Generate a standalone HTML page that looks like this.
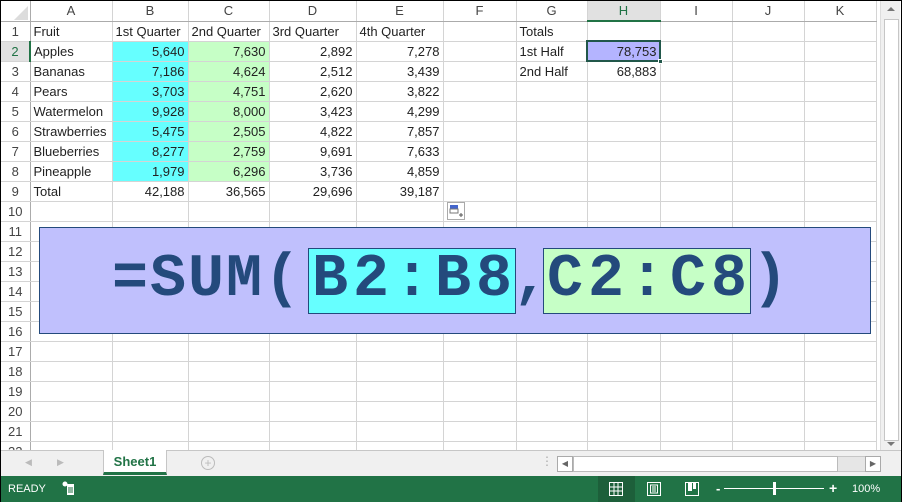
<!DOCTYPE html>
<html><head><style>
*{margin:0;padding:0;box-sizing:border-box}
body{width:902px;height:502px;overflow:hidden;background:#fff;font-family:"Liberation Sans",sans-serif;font-size:13px;color:#222;position:relative}
#frame{position:absolute;left:0;top:0;width:902px;height:502px;border:1px solid #000;border-bottom:none;pointer-events:none;z-index:20}
table{position:absolute;left:1px;top:1px;border-collapse:collapse;table-layout:fixed}
td{height:20px;border-right:1px solid #d4d4d4;border-bottom:1px solid #d4d4d4;padding:0 3px;white-space:nowrap;overflow:hidden;line-height:19px}
tr.h td{text-align:center;color:#444;height:20px;line-height:18px;border-bottom:1px solid #ababab}
td.rh{text-align:center;color:#444;border-right:1px solid #ababab;padding:0}
td.n{text-align:right}
.cy{background:#66ffff}.gr{background:#c6ffc6}
#vs{position:absolute;left:880px;top:1px;width:20px;height:449px;background:#f0f0f0;border-left:1px solid #ddd}
#tabs{position:absolute;left:0;top:450px;width:902px;height:26px;background:#f0f0f0;border-top:1px solid #c6c6c6}
#status{position:absolute;left:0;top:476px;width:902px;height:26px;background:#217346;color:#fff;font-size:11px}
.box{position:absolute;font-family:"Liberation Mono",monospace;font-weight:bold;font-size:60px;color:#244a7c;line-height:1}
</style></head><body>
<div style="position:absolute;left:14px;top:6px;width:0;height:0;border-left:14px solid transparent;border-bottom:14px solid #dcdcdc;z-index:5"></div>
<table>
<colgroup><col style="width:29px"><col style="width:82px"><col style="width:76px"><col style="width:81px"><col style="width:87px"><col style="width:87px"><col style="width:73px"><col style="width:71px"><col style="width:73px"><col style="width:72px"><col style="width:72px"><col style="width:72px"></colgroup>
<tr class="h"><td class="rh"></td><td>A</td><td>B</td><td>C</td><td>D</td><td>E</td><td>F</td><td>G</td><td style="background:#e1e1e1;color:#217346;border-bottom:2px solid #217346">H</td><td>I</td><td>J</td><td>K</td></tr>
<tr><td class="rh">1</td><td>Fruit</td><td>1st Quarter</td><td>2nd Quarter</td><td>3rd Quarter</td><td>4th Quarter</td><td></td><td>Totals</td><td></td><td></td><td></td><td></td></tr>
<tr><td class="rh" style="background:#e1e1e1;color:#217346;border-right:2px solid #217346">2</td><td>Apples</td><td class="n cy">5,640</td><td class="n gr">7,630</td><td class="n">2,892</td><td class="n">7,278</td><td></td><td>1st Half</td><td class="n" style="background:#b4b4ff;outline:2px solid #21574a;outline-offset:-1px">78,753</td><td></td><td></td><td></td></tr>
<tr><td class="rh">3</td><td>Bananas</td><td class="n cy">7,186</td><td class="n gr">4,624</td><td class="n">2,512</td><td class="n">3,439</td><td></td><td>2nd Half</td><td class="n">68,883</td><td></td><td></td><td></td></tr>
<tr><td class="rh">4</td><td>Pears</td><td class="n cy">3,703</td><td class="n gr">4,751</td><td class="n">2,620</td><td class="n">3,822</td><td></td><td></td><td></td><td></td><td></td><td></td></tr>
<tr><td class="rh">5</td><td>Watermelon</td><td class="n cy">9,928</td><td class="n gr">8,000</td><td class="n">3,423</td><td class="n">4,299</td><td></td><td></td><td></td><td></td><td></td><td></td></tr>
<tr><td class="rh">6</td><td>Strawberries</td><td class="n cy">5,475</td><td class="n gr">2,505</td><td class="n">4,822</td><td class="n">7,857</td><td></td><td></td><td></td><td></td><td></td><td></td></tr>
<tr><td class="rh">7</td><td>Blueberries</td><td class="n cy">8,277</td><td class="n gr">2,759</td><td class="n">9,691</td><td class="n">7,633</td><td></td><td></td><td></td><td></td><td></td><td></td></tr>
<tr><td class="rh">8</td><td>Pineapple</td><td class="n cy">1,979</td><td class="n gr">6,296</td><td class="n">3,736</td><td class="n">4,859</td><td></td><td></td><td></td><td></td><td></td><td></td></tr>
<tr><td class="rh">9</td><td>Total</td><td class="n">42,188</td><td class="n">36,565</td><td class="n">29,696</td><td class="n">39,187</td><td></td><td></td><td></td><td></td><td></td><td></td></tr>
<tr><td class="rh">10</td><td></td><td></td><td></td><td></td><td></td><td></td><td></td><td></td><td></td><td></td><td></td></tr>
<tr><td class="rh">11</td><td></td><td></td><td></td><td></td><td></td><td></td><td></td><td></td><td></td><td></td><td></td></tr>
<tr><td class="rh">12</td><td></td><td></td><td></td><td></td><td></td><td></td><td></td><td></td><td></td><td></td><td></td></tr>
<tr><td class="rh">13</td><td></td><td></td><td></td><td></td><td></td><td></td><td></td><td></td><td></td><td></td><td></td></tr>
<tr><td class="rh">14</td><td></td><td></td><td></td><td></td><td></td><td></td><td></td><td></td><td></td><td></td><td></td></tr>
<tr><td class="rh">15</td><td></td><td></td><td></td><td></td><td></td><td></td><td></td><td></td><td></td><td></td><td></td></tr>
<tr><td class="rh">16</td><td></td><td></td><td></td><td></td><td></td><td></td><td></td><td></td><td></td><td></td><td></td></tr>
<tr><td class="rh">17</td><td></td><td></td><td></td><td></td><td></td><td></td><td></td><td></td><td></td><td></td><td></td></tr>
<tr><td class="rh">18</td><td></td><td></td><td></td><td></td><td></td><td></td><td></td><td></td><td></td><td></td><td></td></tr>
<tr><td class="rh">19</td><td></td><td></td><td></td><td></td><td></td><td></td><td></td><td></td><td></td><td></td><td></td></tr>
<tr><td class="rh">20</td><td></td><td></td><td></td><td></td><td></td><td></td><td></td><td></td><td></td><td></td><td></td></tr>
<tr><td class="rh">21</td><td></td><td></td><td></td><td></td><td></td><td></td><td></td><td></td><td></td><td></td><td></td></tr>
<tr><td class="rh">22</td><td></td><td></td><td></td><td></td><td></td><td></td><td></td><td></td><td></td><td></td><td></td></tr>
</table>
<div style="position:absolute;left:658px;top:59px;width:5px;height:5px;background:#21574a;border:1px solid #fff"></div>
<svg style="position:absolute;left:447px;top:202px" width="18" height="18"><rect x="0.5" y="0.5" width="17" height="17" fill="#fff" stroke="#aaa"/><rect x="3" y="3" width="8" height="4" fill="#4466cc"/><rect x="3" y="7" width="8" height="4" fill="none" stroke="#777"/><path d="M12 13h4M14 11v4" stroke="#555"/></svg>
<div style="position:absolute;left:39px;top:227px;width:832px;height:107px;background:#c0c0fd;border:1px solid #244a7c"></div>
<div style="position:absolute;left:308px;top:248px;width:208px;height:66px;background:#66ffff;border:1px solid #244a7c"></div>
<div style="position:absolute;left:543px;top:248px;width:208px;height:66px;background:#c6ffc6;border:1px solid #244a7c"></div>
<div class="box" style="left:112px;top:250px;letter-spacing:2px">=SUM(</div>
<div class="box" style="left:312px;top:250px;letter-spacing:5px">B2:B8</div>
<div class="box" style="left:513px;top:250px">,</div>
<div class="box" style="left:547px;top:250px;letter-spacing:5px">C2:C8</div>
<div class="box" style="left:752px;top:250px">)</div>
<div id="vs"><div style="position:absolute;left:3px;top:18px;width:15px;height:422px;background:#fff;border:1px solid #c6c6c6"></div><div style="position:absolute;left:6px;top:6px;border:4px solid transparent;border-bottom:4px solid #777;border-top:none"></div><div style="position:absolute;left:6px;top:441px;border:4px solid transparent;border-top:4px solid #777;border-bottom:none"></div></div>
<div id="tabs">
<span style="position:absolute;left:25px;top:6px;color:#bbb;font-size:9px">◀</span><span style="position:absolute;left:57px;top:6px;color:#bbb;font-size:9px">▶</span>
<div style="position:absolute;left:103px;top:-1px;width:64px;height:25px;background:#fff;border:1px solid #c6c6c6;border-top:none;border-bottom:3px solid #217346;color:#217346;font-weight:bold;text-align:center;line-height:23px;font-size:13px">Sheet1</div>
<div style="position:absolute;left:201px;top:5px;width:14px;height:14px;border:1px solid #bbb;border-radius:50%;color:#bbb;font-size:12px;line-height:12px;text-align:center">+</div>
<span style="position:absolute;left:541px;top:3px;color:#aaa;font-size:12px">⋮</span>
<div style="position:absolute;left:557px;top:5px;width:324px;height:16px;background:#e6e6e6;border:1px solid #c6c6c6"></div>
<div style="position:absolute;left:557px;top:5px;width:16px;height:16px;border:1px solid #aaa;background:#fff;font-size:8px;color:#666;text-align:center;line-height:14px">◀</div>
<div style="position:absolute;left:573px;top:5px;width:265px;height:16px;background:#fff;border:1px solid #bbb"></div>
<div style="position:absolute;left:865px;top:5px;width:16px;height:16px;border:1px solid #aaa;background:#fff;font-size:8px;color:#666;text-align:center;line-height:14px">▶</div>
</div>
<div id="status">
<span style="position:absolute;left:8px;top:7px">READY</span>
<svg style="position:absolute;left:62px;top:5px" width="12" height="15"><circle cx="3" cy="3" r="2.5" fill="#fff"/><rect x="5" y="3" width="7" height="11" fill="#fff"/><path d="M6 7h5M6 9h5M6 11h5" stroke="#217346"/></svg>
<div style="position:absolute;left:598px;top:0;width:37px;height:26px;background:#1d5f3a"></div>
<svg style="position:absolute;left:609px;top:6px" width="14" height="14"><path d="M0.5 0.5h13v13h-13zM5 0.5v13M9 0.5v13M0.5 5h13M0.5 9h13" stroke="#fff" fill="none"/></svg>
<svg style="position:absolute;left:647px;top:6px" width="14" height="14"><rect x="0.5" y="0.5" width="13" height="13" fill="none" stroke="#fff"/><rect x="3.5" y="3" width="7" height="8" fill="none" stroke="#fff"/><path d="M5 5h4M5 7h4M5 9h4" stroke="#fff"/></svg>
<svg style="position:absolute;left:685px;top:6px" width="14" height="14"><rect x="0.5" y="0.5" width="13" height="13" fill="none" stroke="#fff"/><rect x="3" y="1" width="4" height="8" fill="#fff"/><rect x="8" y="1" width="3" height="6" fill="#fff"/></svg>
<span style="position:absolute;left:716px;top:5px;font-weight:bold;font-size:13px">-</span>
<div style="position:absolute;left:724px;top:12px;width:100px;height:1px;background:#fff"></div>
<div style="position:absolute;left:773px;top:6px;width:3px;height:13px;background:#fff"></div>
<span style="position:absolute;left:829px;top:4px;font-weight:bold;font-size:14px">+</span>
<span style="position:absolute;left:852px;top:7px">100%</span>
</div>
<div id="frame"></div>
</body></html>
